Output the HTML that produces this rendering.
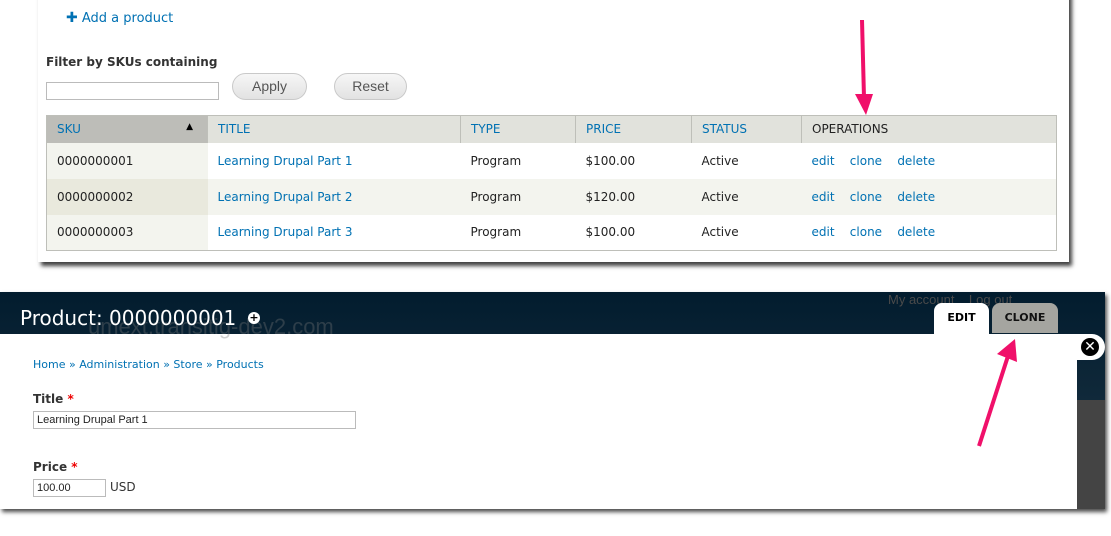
<!DOCTYPE html>
<html><head><style>
*{margin:0;padding:0;box-sizing:border-box}
body{width:1111px;height:536px;background:#fff;position:relative;overflow:hidden;font-family:"DejaVu Sans","Liberation Sans",sans-serif;font-size:12px;color:#222}
.a{position:absolute}
.link{color:#0071b3}
table{border-collapse:collapse;position:absolute;left:46px;top:115px;width:1011px;border:1px solid #bebfb9}
th{height:27px;background:#e1e2dc;text-align:left;font-weight:normal;padding-left:10px;border-right:1px solid #bebfb9;color:#0071b3;font-size:12px}
td{height:36px;padding-left:10px;font-size:12px}
tr.e td{background:#f3f4ee}
td.s{background:#f3f4ee}
tr.e td.s{background:#e9e9dd}
.btn{position:absolute;height:27px;border:1px solid #c9c9c9;border-radius:14px;background:linear-gradient(#f6f6f6,#e2e2e2);font-size:14px;color:#555;text-align:center;line-height:25px;font-family:"Liberation Sans",sans-serif}
</style></head><body>
<div class="a" style="left:38px;top:-10px;width:1031px;height:272px;background:#fff;box-shadow:3px 4px 4px rgba(0,0,0,.75)"></div>
<div class="a link" style="left:66px;top:10px;font-size:13px"><b style="font-size:14px">✚</b> Add a product</div>
<div class="a" style="left:46px;top:55px;font-weight:bold;font-size:12px;color:#333">Filter by SKUs containing</div>
<div class="a" style="left:46px;top:82px;width:173px;height:18px;border:1px solid #bbb"></div>
<div class="btn" style="left:232px;top:73px;width:75px">Apply</div>
<div class="btn" style="left:334px;top:73px;width:73px">Reset</div>
<table>
<tr><th style="width:161px;background:#bdbdb8">SKU<span style="float:right;margin-right:14px;color:#000;font-size:9px">▲</span></th><th style="width:253px">TITLE</th><th style="width:115px">TYPE</th><th style="width:116px">PRICE</th><th style="width:110px">STATUS</th><th style="color:#222;border-right:0">OPERATIONS</th></tr>
<tr><td class="s">0000000001</td><td class="link">Learning Drupal Part 1</td><td>Program</td><td>$100.00</td><td>Active</td><td class="link">edit &nbsp;&nbsp; clone &nbsp;&nbsp; delete</td></tr>
<tr class="e"><td class="s">0000000002</td><td class="link">Learning Drupal Part 2</td><td>Program</td><td>$120.00</td><td>Active</td><td class="link">edit &nbsp;&nbsp; clone &nbsp;&nbsp; delete</td></tr>
<tr><td class="s">0000000003</td><td class="link">Learning Drupal Part 3</td><td>Program</td><td>$100.00</td><td>Active</td><td class="link">edit &nbsp;&nbsp; clone &nbsp;&nbsp; delete</td></tr>
</table>
<svg class="a" style="left:850px;top:18px" width="30" height="100"><path d="M12 2 L14 80" stroke="#f0106a" stroke-width="4"/><path d="M5 76 L23 76 L16 97 Z" fill="#f0106a"/></svg>
<div class="a" style="left:0;top:292px;width:1105px;height:217px;background:#444;box-shadow:2px 3px 4px rgba(0,0,0,.7)"></div>
<div class="a" style="left:0;top:292px;width:1105px;height:108px;background:linear-gradient(#021c2e,#10293a)"></div>
<div class="a" style="left:0;top:334px;width:1077px;height:175px;background:#fff"></div>
<div class="a" style="left:1077px;top:334px;width:28px;height:26px;background:#fff;border-radius:0 13px 13px 0"></div>
<div class="a" style="left:1081px;top:338px;width:18px;height:18px;border-radius:50%;background:#000;color:#fff;font-size:14px;line-height:18px;text-align:center;font-weight:bold">✕</div>
<div class="a" style="left:88px;top:314px;font-size:22px;color:rgba(120,120,120,.35);font-family:'Liberation Sans',sans-serif">umext.transitig-dev2.com</div>
<div class="a" style="left:20px;top:306px;font-size:20px;color:#fff;font-family:'DejaVu Sans',sans-serif">Product: 0000000001</div>
<div class="a" style="left:248px;top:312px;width:12px;height:12px;border-radius:50%;background:#fff;color:#000;font-size:11px;line-height:12px;text-align:center;font-weight:bold">+</div>
<div class="a" style="left:888px;top:292px;font-size:13px;color:#4a4a4a;font-family:'Liberation Sans',sans-serif">My account &nbsp;&nbsp; Log out</div>
<div class="a" style="left:934px;top:303px;width:55px;height:31px;background:#fff;border-radius:8px 8px 0 0;font-weight:bold;font-size:11px;text-align:center;line-height:30px;color:#000">EDIT</div>
<div class="a" style="left:992px;top:303px;width:66px;height:30px;background:#a5a5a0;border-radius:8px 8px 0 0;font-weight:bold;font-size:11px;text-align:center;line-height:30px;color:#111">CLONE</div>
<svg class="a" style="left:970px;top:336px" width="50" height="115"><path d="M9 110 L38 20" stroke="#f0106a" stroke-width="4"/><path d="M27 18 L47 26 L45 3 Z" fill="#f0106a"/></svg>
<div class="a" style="left:33px;top:358px;font-size:11px;color:#0071b3">Home » Administration » Store » Products</div>
<div class="a" style="left:33px;top:392px;font-size:12px;font-weight:bold;color:#333">Title <span style="color:#e00">*</span></div>
<div class="a" style="left:33px;top:411px;width:323px;height:18px;border:1px solid #bbb;font-size:11px;line-height:16px;padding-left:3px;font-family:'Liberation Sans',sans-serif">Learning Drupal Part 1</div>
<div class="a" style="left:33px;top:460px;font-size:12px;font-weight:bold;color:#333">Price <span style="color:#e00">*</span></div>
<div class="a" style="left:33px;top:479px;width:73px;height:18px;border:1px solid #bbb;font-size:11px;line-height:16px;padding-left:3px;font-family:'Liberation Sans',sans-serif">100.00</div>
<div class="a" style="left:110px;top:480px;font-size:12px;color:#333">USD</div>
</body></html>
